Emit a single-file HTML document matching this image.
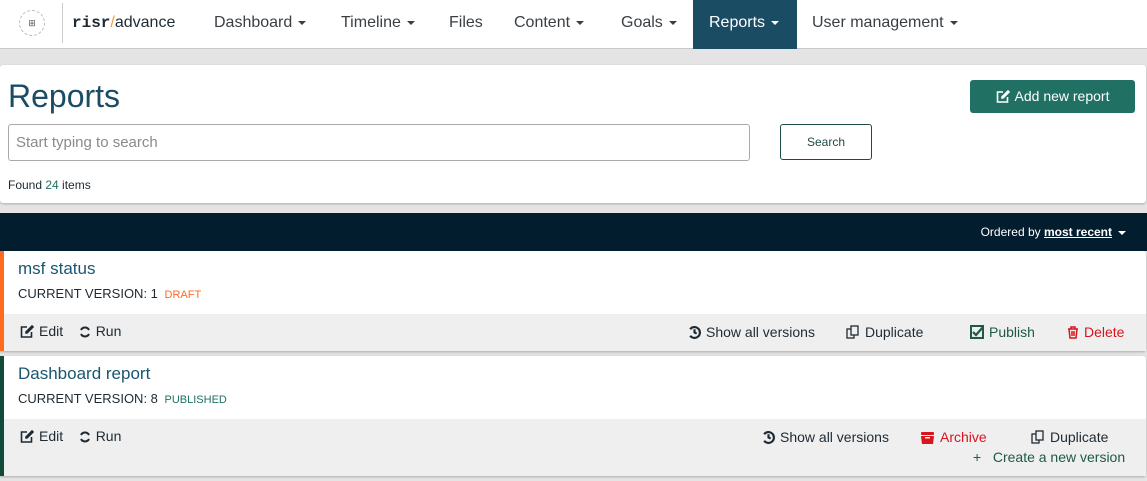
<!DOCTYPE html>
<html><head><meta charset="utf-8"><style>
*{box-sizing:border-box;margin:0;padding:0}
body{width:1147px;height:481px;background:#e4e4e4;font-family:"Liberation Sans",sans-serif;position:relative;overflow:hidden;color:#1e2a33}
.a{position:absolute;white-space:nowrap}
.nav{position:absolute;left:0;top:0;width:1147px;height:49px;background:#fff;border-bottom:1px solid #c8c8c8}
.ni{position:absolute;top:14px;font-size:16px;color:#3a3f44}
.car{display:inline-block;width:0;height:0;border-left:4px solid transparent;border-right:4px solid transparent;border-top:4px solid currentColor;vertical-align:middle;margin-left:6px}
.card{position:absolute;left:0;width:1146px;background:#fff;border-radius:0 3px 3px 0;box-shadow:0 1px 2px rgba(0,0,0,.25)}
.foot{position:absolute;left:0;right:0;bottom:0;background:#efefef}
.t{font-size:14px}
svg{vertical-align:-2px;margin-right:5px}
</style></head><body>
<div class="nav">
 <div class="a" style="left:19px;top:10px;width:26px;height:26px;border-radius:50%;border:1px dashed #bbb;font-size:9px;text-align:center;line-height:24px;color:#555">⊞</div>
 <div class="a" style="left:62px;top:3px;width:1px;height:40px;background:#ccc"></div>
 <div class="a" style="left:72px;top:14px;font-size:16px;color:#1e2a33"><b style="font-family:'Liberation Mono',monospace">risr</b><span style="color:#f0a030">/</span>advance</div>
 <div class="ni" style="left:214px">Dashboard<span class="car"></span></div>
 <div class="ni" style="left:341px">Timeline<span class="car"></span></div>
 <div class="ni" style="left:449px">Files</div>
 <div class="ni" style="left:514px">Content<span class="car"></span></div>
 <div class="ni" style="left:621px">Goals<span class="car"></span></div>
 <div class="a" style="left:693px;top:0;width:104px;height:49px;background:#1a4d63"></div>
 <div class="ni" style="left:709px;color:#fff">Reports<span class="car"></span></div>
 <div class="ni" style="left:812px">User management<span class="car"></span></div>
</div>
<div class="card" style="top:65px;height:138px;border-radius:3px">
 <div class="a" style="left:8px;top:13px;font-size:32px;color:#1a4d63">Reports</div>
 <div class="a" style="left:970px;top:15px;width:165px;height:33px;background:#207063;border-radius:3px;color:#fff;font-size:14px;line-height:33px;text-align:center"><svg width="14" height="13" viewBox="0 0 14 13" fill="none" stroke="#fff" stroke-width="1.6"><path d="M7 2H1.5v10h10V7"/><path d="M12 1l1 1-6 6H6V7z" fill="#fff"/></svg>Add new report</div>
 <div class="a" style="left:8px;top:59px;width:742px;height:37px;border:1px solid #aaa;border-radius:3px;font-size:15px;color:#8a8a8a;padding:9px 7px">Start typing to search</div>
 <div class="a" style="left:780px;top:59px;width:92px;height:36px;border:1px solid #1e4a44;border-radius:3px;font-size:12px;color:#1e4a44;text-align:center;line-height:34px">Search</div>
 <div class="a" style="left:8px;top:113px;font-size:12px">Found <span style="color:#207063">24</span> items</div>
</div>
<div class="a" style="left:0;top:213px;width:1147px;height:38px;background:#021d2e"></div>
<div class="a" style="right:21px;top:225px;font-size:12px;color:#fff">Ordered by <b><u>most recent</u></b><span class="car"></span></div>
<div class="card" style="top:251px;height:100px;border-left:4px solid #ff6a21">
 <div class="a" style="left:14px;top:8px;font-size:17px;color:#1a5670">msf status</div>
 <div class="a t" style="left:14px;top:35px;font-size:13px">CURRENT VERSION: 1 <span style="color:#ff6a21;font-size:11px;margin-left:3px">DRAFT</span></div>
 <div class="foot" style="height:37px">
  <div class="a t" style="left:16px;top:9px"><svg width="14" height="13" viewBox="0 0 14 13" fill="none" stroke="#1e2a33" stroke-width="1.6"><path d="M7 2H1.5v10h10V7"/><path d="M12 1l1 1-6 6H6V7z" fill="#1e2a33"/></svg>Edit &nbsp;&nbsp;&nbsp;<svg width="12" height="12" viewBox="0 0 12 12" fill="none" stroke="#1e2a33" stroke-width="2"><path d="M10 4A4.5 4.5 0 0 0 2 4M2 8a4.5 4.5 0 0 0 8 0"/></svg>Run</div>
  <div class="a t" style="left:684px;top:10px"><svg width="13" height="13" viewBox="0 0 12 12" fill="none" stroke="#1e2a33" stroke-width="2"><path d="M2 3a5 5 0 1 1 0 6M6 3v3l2 1"/></svg>Show all versions</div>
  <div class="a t" style="left:842px;top:10px"><svg width="14" height="14" viewBox="0 0 14 14" fill="none" stroke="#1e2a33" stroke-width="1.3"><rect x="1" y="4" width="7" height="9"/><rect x="5" y="1" width="7" height="9" fill="#efefef"/></svg>Duplicate</div>
  <div class="a t" style="left:966px;top:10px;color:#1e5a44"><svg width="14" height="14" viewBox="0 0 14 14"><rect x="0" y="0" width="14" height="14" fill="#1e5a44"/><rect x="2" y="2" width="10" height="10" fill="#efefef"/><path d="M3 7l3 3 7-8" stroke="#1e5a44" stroke-width="2.2" fill="none"/></svg>Publish</div>
  <div class="a t" style="left:1063px;top:10px;color:#d8141e"><svg width="12" height="13" viewBox="0 0 12 13" fill="none" stroke="#d8141e" stroke-width="1.5"><path d="M1 3h10M4 3V1h4v2M2 3l1 9h6l1-9M5 5v5M7 5v5"/></svg>Delete</div>
 </div>
</div>
<div class="card" style="top:356px;height:120px;border-left:4px solid #114a3a">
 <div class="a" style="left:14px;top:8px;font-size:17px;color:#1a5670">Dashboard report</div>
 <div class="a t" style="left:14px;top:35px;font-size:13px">CURRENT VERSION: 8 <span style="color:#207063;font-size:11px;margin-left:3px">PUBLISHED</span></div>
 <div class="foot" style="height:57px">
  <div class="a t" style="left:16px;top:9px"><svg width="14" height="13" viewBox="0 0 14 13" fill="none" stroke="#1e2a33" stroke-width="1.6"><path d="M7 2H1.5v10h10V7"/><path d="M12 1l1 1-6 6H6V7z" fill="#1e2a33"/></svg>Edit &nbsp;&nbsp;&nbsp;<svg width="12" height="12" viewBox="0 0 12 12" fill="none" stroke="#1e2a33" stroke-width="2"><path d="M10 4A4.5 4.5 0 0 0 2 4M2 8a4.5 4.5 0 0 0 8 0"/></svg>Run</div>
  <div class="a t" style="left:758px;top:10px"><svg width="13" height="13" viewBox="0 0 12 12" fill="none" stroke="#1e2a33" stroke-width="2"><path d="M2 3a5 5 0 1 1 0 6M6 3v3l2 1"/></svg>Show all versions</div>
  <div class="a t" style="left:916px;top:10px;color:#d8141e"><svg width="15" height="12" viewBox="0 0 15 12"><rect x="1" y="0" width="13" height="3" rx="1" fill="#d8141e"/><path d="M1 4h13l-1 8H2z" fill="#d8141e"/><rect x="5" y="5" width="5" height="1.5" fill="#efefef"/></svg>Archive</div>
  <div class="a t" style="left:1027px;top:10px"><svg width="14" height="14" viewBox="0 0 14 14" fill="none" stroke="#1e2a33" stroke-width="1.3"><rect x="1" y="4" width="7" height="9"/><rect x="5" y="1" width="7" height="9" fill="#efefef"/></svg>Duplicate</div>
  <div class="a t" style="left:969px;top:30px;color:#1e5a44">+&nbsp;&nbsp; Create a new version</div>
 </div>
</div>
</body></html>
